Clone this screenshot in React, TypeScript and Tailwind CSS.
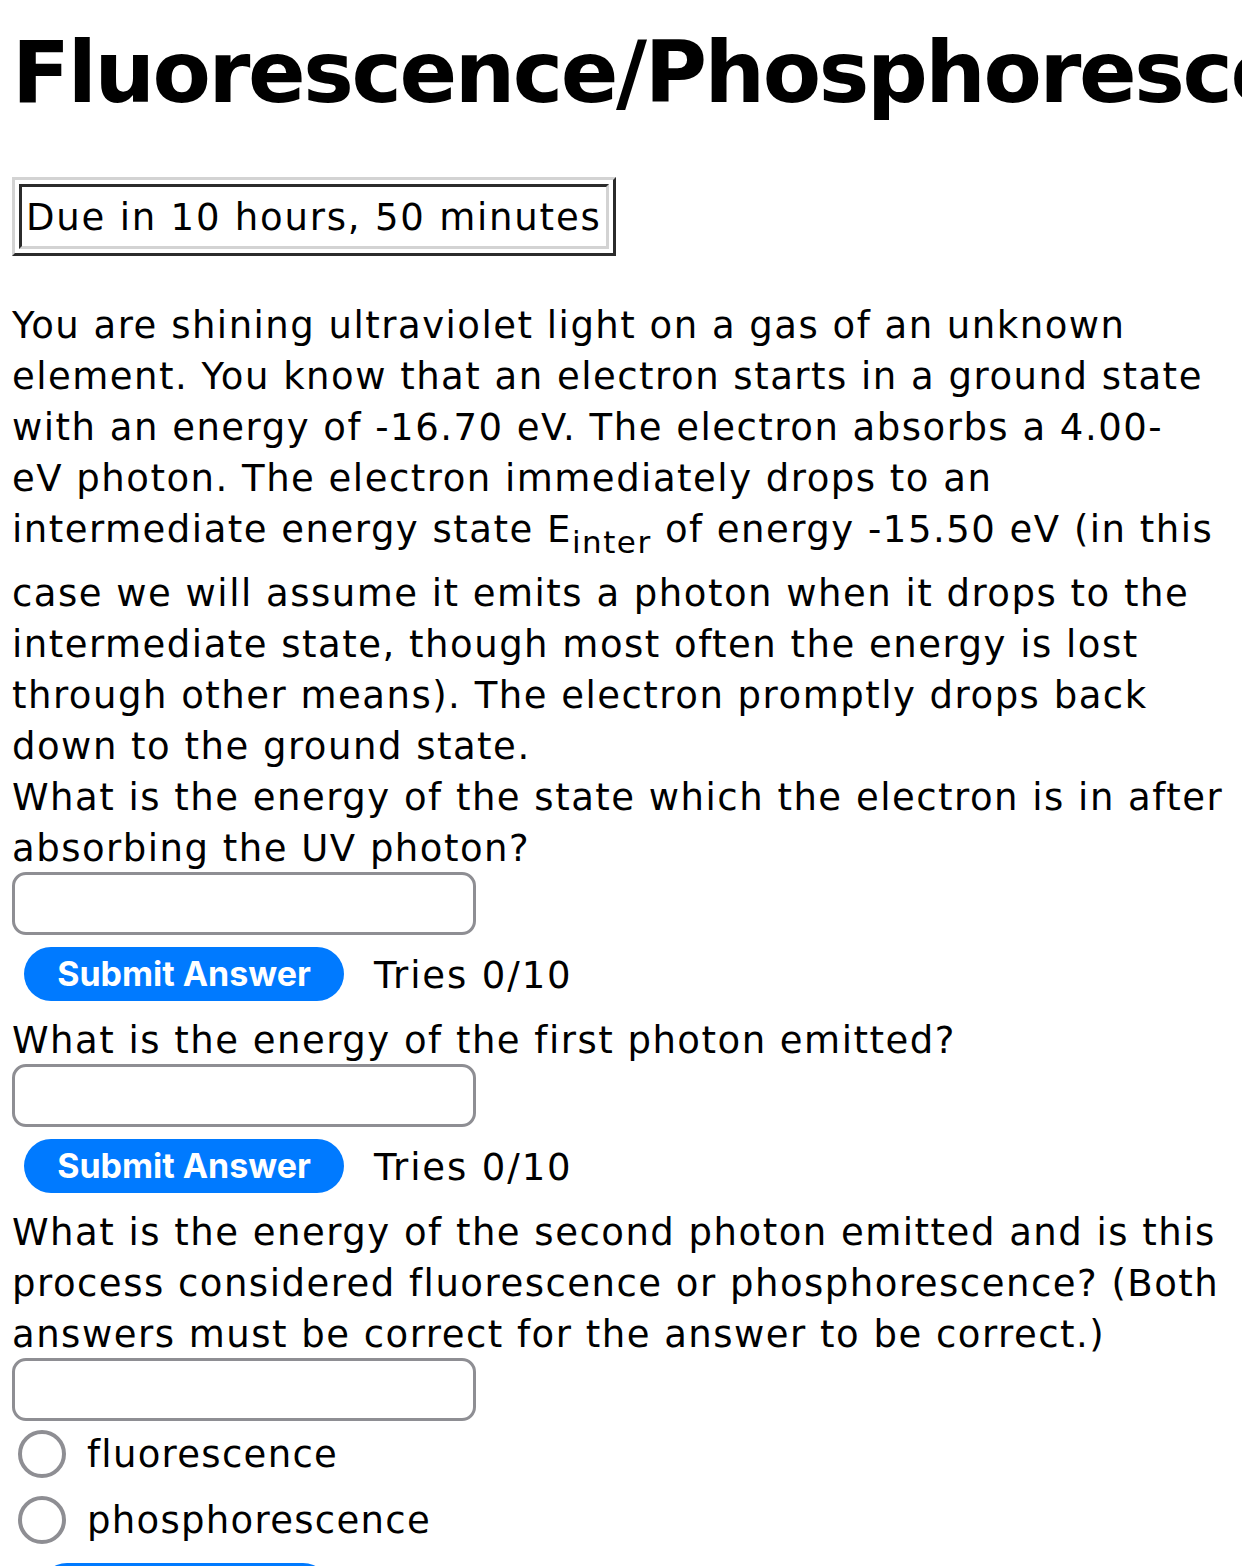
import React from "react";

function AnswerBlock({ withButton = true }: { withButton?: boolean }) {
  return (
    <div>
      <div className="-mt-[2px] w-[464px] h-[63px] border-[3px] border-[#8e8e93] rounded-[14px] bg-white" />
      {withButton && (
        <div className="flex items-center mt-[11px] ml-[12px]">
          <div
            className="w-[320px] h-[54px] rounded-full bg-[#007aff] flex items-center justify-center text-white font-bold text-[34px] leading-none"
            style={{ fontFamily: 'Inter, "Noto Sans", sans-serif' }}
          >
            Submit Answer
          </div>
          <div className="ml-[30px] pt-[4px] text-[37px] leading-[51px] tracking-[1.9px]">Tries 0/10</div>
        </div>
      )}
    </div>
  );
}

function Radio({ label }: { label: string }) {
  return (
    <div className="flex items-center h-[66px]">
      <div className="ml-[6px] w-[48px] h-[48px] rounded-full border-[4px] border-[#8e8e93] bg-white" />
      <div className="ml-[21px] text-[37px] leading-[51px] tracking-[1.3px]">{label}</div>
    </div>
  );
}

export default function App() {
  return (
    <div
      className="w-[1242px] h-[1566px] overflow-hidden bg-white text-black px-[12px]"
      style={{ fontFamily: '"DejaVu Sans", Verdana, sans-serif' }}
    >
      <h1 className="mt-[30px] text-[85px] leading-none font-bold whitespace-nowrap tracking-[-2.4px]">
        Fluorescence/Phosphorescence
      </h1>
      <div className="mt-[62px] inline-block border-[3px] border-t-[#d3d3d3] border-l-[#d3d3d3] border-b-[#2b2b2b] border-r-[#2b2b2b] p-[4px]">
        <div className="border-[3px] border-t-[#2b2b2b] border-l-[#2b2b2b] border-b-[#d3d3d3] border-r-[#d3d3d3] pl-[4px] pr-[4px] pt-[7px] pb-[5px] text-[37px] leading-[47px] whitespace-nowrap tracking-[1.8px]">
          Due in 10 hours, 50 minutes
        </div>
      </div>
      <div className="mt-[44px] text-[37px] leading-[51px] tracking-[1.5px]">
        <p>
          You are shining ultraviolet light on a gas of an unknown element. You know that an electron starts in a ground
          state with an energy of -16.70 eV. The electron absorbs a 4.00-
          <br />
          eV photon. The electron immediately drops to an intermediate energy state E
          <span className="align-[-11px] text-[31px] leading-[51px]">inter</span> of energy -15.50 eV (in this case we
          will assume it emits a photon when it drops to the intermediate state, though most often the energy is lost
          through other means). The electron promptly drops back down to the ground state.
        </p>
        <p>What is the energy of the state which the electron is in after absorbing the UV photon?</p>
      </div>
      <AnswerBlock />
      <p className="mt-[14px] text-[37px] leading-[51px] tracking-[1.5px]">
        What is the energy of the first photon emitted?
      </p>
      <AnswerBlock />
      <p className="mt-[14px] text-[37px] leading-[51px] tracking-[1.5px]">
        What is the energy of the second photon emitted and is this process considered fluorescence or phosphorescence?
        (Both answers must be correct for the answer to be correct.)
      </p>
      <AnswerBlock withButton={false} />
      <div>
        <Radio label="fluorescence" />
        <Radio label="phosphorescence" />
      </div>
      <div className="mt-[10px] ml-[28px] w-[290px] h-[54px] rounded-full bg-[#007aff]" />
    </div>
  );
}
